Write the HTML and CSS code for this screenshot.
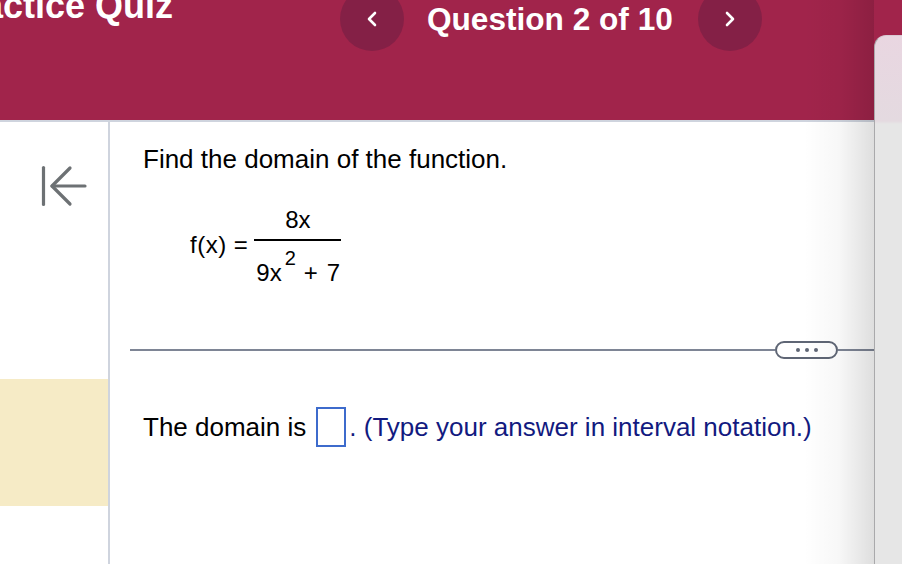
FILE: index.html
```html
<!DOCTYPE html>
<html lang="en">
<head>
<meta charset="utf-8">
<title>Practice Quiz</title>
<link rel="stylesheet" href="styles.css">
</head>
<body>
<header class="header">
  <div class="quiz-title">Practice Quiz</div>
  <nav class="nav">
    <button class="nav-btn" aria-label="Previous question">
      <svg width="12" height="16" viewBox="0 0 12 16"><polyline points="9,2 3,8 9,14" fill="none" stroke="#fff" stroke-width="2.6" stroke-linecap="round" stroke-linejoin="round"/></svg>
    </button>
    <div class="q-label">Question 2 of 10</div>
    <button class="nav-btn" aria-label="Next question">
      <svg width="12" height="16" viewBox="0 0 12 16"><polyline points="3,2 9,8 3,14" fill="none" stroke="#fff" stroke-width="2.6" stroke-linecap="round" stroke-linejoin="round"/></svg>
    </button>
  </nav>
</header>
<div class="main">
  <aside class="sidebar">
    <svg class="collapse-icon" width="46" height="42" viewBox="0 0 46 42"><g fill="none" stroke="#6d7174" stroke-width="3.2" stroke-linecap="round" stroke-linejoin="round"><line x1="2.5" y1="2.5" x2="2.5" y2="39.5"/><line x1="11" y1="21" x2="44" y2="21"/><polyline points="29,3 11,21 29,39"/></g></svg>
    <div class="sidebar-note"></div>
  </aside>
  <section class="content">
    <p class="prompt">Find the domain of the function.</p>
    <div class="formula">
      <span class="fx">f(x)&nbsp;=</span>
      <span class="frac">
        <span class="num">8x</span>
        <span class="den">9x<sup class="sup">2</sup><span class="plus">+</span>7</span>
      </span>
    </div>
    <div class="divider">
      <span class="rule"></span>
      <button class="more" aria-label="More"><i></i><i></i><i></i></button>
      <span class="rule rule-end"></span>
    </div>
    <div class="answer">
      <span>The domain is</span>
      <span class="answer-box"></span>
      <span class="hint">. (Type your answer in interval notation.)</span>
    </div>
  </section>
</div>
<div class="panel-shadow"></div>
<div class="side-panel"></div>
</body>
</html>
```
FILE: styles.css
```css
html, body {
  margin: 0;
  padding: 0;
}
body {
  width: 902px;
  height: 564px;
  overflow: hidden;
  position: relative;
  background: #fff;
  font-family: "Liberation Sans", Arial, Helvetica, sans-serif;
  color: #000;
}
.header {
  height: 120px;
  background: #a1244b;
  border-bottom: 2px solid #cfd4de;
  display: flex;
  align-items: flex-start;
  overflow: hidden;
}
.quiz-title {
  flex-shrink: 0;
  width: 233px;
  margin: -15px 0 0 -55px;
  font-size: 36px;
  font-weight: bold;
  color: #fff;
  white-space: nowrap;
}
.nav {
  display: flex;
  align-items: center;
  margin: -13px 0 0 162px;
}
.nav-btn {
  width: 64px;
  height: 64px;
  flex-shrink: 0;
  border: 0;
  padding: 0;
  border-radius: 50%;
  background: #842046;
  display: flex;
  align-items: center;
  justify-content: center;
}
.q-label {
  margin: 0 25px 0 23px;
  font-size: 31.6px;
  line-height: 34px;
  font-weight: bold;
  color: #fff;
  white-space: nowrap;
}
.main {
  display: flex;
  height: 442px;
}
.sidebar {
  width: 108px;
  flex-shrink: 0;
  border-right: 2px solid #cfd4de;
  padding-top: 43px;
}
.collapse-icon {
  display: block;
  margin-left: 41px;
}
.sidebar-note {
  margin-top: 172px;
  height: 127px;
  background: #f6ebc6;
}
.content {
  flex: 1;
  padding: 22px 0 0 33px;
}
.prompt {
  margin: 0;
  font-size: 26px;
  line-height: 30px;
}
.formula {
  display: flex;
  align-items: flex-start;
  margin: 32px 0 0 47px;
  font-size: 24px;
  line-height: 28px;
}
.fx {
  margin-top: 25px;
  margin-right: 6px;
  letter-spacing: 0.5px;
  white-space: nowrap;
}
.frac {
  display: flex;
  flex-direction: column;
  align-items: stretch;
  width: 87px;
}
.num {
  text-align: center;
  padding-bottom: 5px;
  border-bottom: 2px solid #000;
}
.den {
  padding: 17px 0 0 2px;
  white-space: nowrap;
}
.sup {
  font-size: 20px;
  line-height: 0;
  vertical-align: 16px;
  margin-left: 3px;
}
.plus {
  margin: 0 9px 0 8px;
}
.divider {
  display: flex;
  align-items: center;
  margin: 54px 0 0 -13px;
  height: 18px;
}
.rule {
  width: 645px;
  height: 2px;
  background: #7e8595;
}
.rule-end {
  flex: 1;
  width: auto;
}
.more {
  width: 63px;
  height: 18px;
  padding: 0;
  box-sizing: border-box;
  border: 2px solid #5f6675;
  border-radius: 9px;
  background: #fff;
  display: flex;
  align-items: center;
  justify-content: center;
  gap: 5px;
}
.more i {
  width: 4px;
  height: 4px;
  border-radius: 50%;
  background: #5f6675;
}
.answer {
  display: flex;
  align-items: center;
  height: 40px;
  margin-top: 48px;
  font-size: 26px;
  line-height: 30px;
  white-space: nowrap;
}
.answer-box {
  width: 30px;
  height: 40px;
  box-sizing: border-box;
  border: 2px solid #3d6bcc;
  margin: 0 3px 0 10px;
}
.hint {
  color: #121a80;
}
.panel-shadow {
  position: absolute;
  left: 804px;
  top: 0;
  width: 70px;
  height: 564px;
  background: linear-gradient(to right, rgba(0,0,0,0), rgba(0,0,0,0.03) 50%, rgba(0,0,0,0.13));
  pointer-events: none;
}
.side-panel {
  position: absolute;
  left: 874px;
  top: 35px;
  width: 40px;
  bottom: 0;
  box-sizing: border-box;
  border-left: 1px solid #a9a9ab;
  border-top: 1px solid #d9c9d3;
  border-top-left-radius: 12px;
  background: linear-gradient(to bottom, #e9d6e1 0, #e4dae0 85px, #e6e6e6 88px, #e6e6e6 100%);
}
```
